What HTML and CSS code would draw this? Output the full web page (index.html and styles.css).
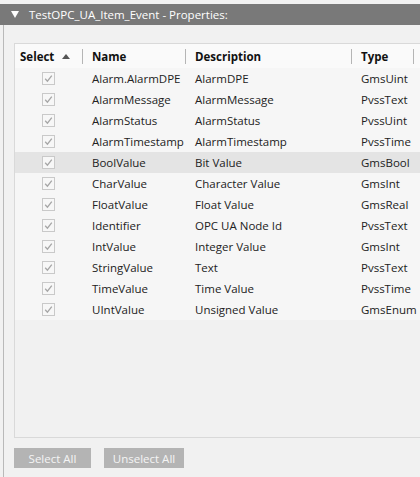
FILE: index.html
```html
<!DOCTYPE html>
<html>
<head>
<meta charset="utf-8">
<link rel="stylesheet" href="styles.css">
</head>
<body>
<div class="titlebar">
  <svg class="tri" width="8" height="7" viewBox="0 0 8 7"><polygon points="0,0 8,0 4,7" fill="#ffffff"/></svg>
  <span class="title">TestOPC_UA_Item_Event - Properties:</span>
</div>
<div class="panel">
  <div class="table">
    <div class="head">
      <div class="hc first">Select<svg class="sort" width="8" height="5" viewBox="0 0 8 5"><polygon points="0,5 8,5 4,0" fill="#555"/></svg></div>
      <div class="hc">Name</div>
      <div class="hc">Description</div>
      <div class="hc">Type</div>
      <div class="hc last"></div>
    </div>
    <div class="rows" id="rows"></div>
  </div>
  <div class="buttons">
    <div class="btn b1">Select All</div>
    <div class="btn b2">Unselect All</div>
  </div>
</div>
<script src="script.js"></script>
</body>
</html>
```
FILE: script.js
```js
var data = [
  ["Alarm.AlarmDPE","AlarmDPE","GmsUint"],
  ["AlarmMessage","AlarmMessage","PvssText"],
  ["AlarmStatus","AlarmStatus","PvssUint"],
  ["AlarmTimestamp","AlarmTimestamp","PvssTime"],
  ["BoolValue","Bit Value","GmsBool"],
  ["CharValue","Character Value","GmsInt"],
  ["FloatValue","Float Value","GmsReal"],
  ["Identifier","OPC UA Node Id","PvssText"],
  ["IntValue","Integer Value","GmsInt"],
  ["StringValue","Text","PvssText"],
  ["TimeValue","Time Value","PvssTime"],
  ["UIntValue","Unsigned Value","GmsEnum"]
];
var box = document.getElementById("rows");
var chk = '<svg width="13" height="13" viewBox="0 0 13 13"><rect x="0.5" y="0.5" width="12" height="12" fill="#f7f7f7" stroke="#c9c9c9"/><path d="M3.2 6.8 L5.4 9.2 L9.8 3.6" fill="none" stroke="#a6a6a6" stroke-width="1.3"/></svg>';
data.forEach(function (d, i) {
  var r = document.createElement("div");
  r.className = "row" + (i === 4 ? " sel" : "");
  r.innerHTML = '<div class="c cb">' + chk + '</div><div class="c">' + d[0] + '</div><div class="c">' + d[1] + '</div><div class="c">' + d[2] + '</div><div class="c"></div>';
  box.appendChild(r);
});
```
FILE: styles.css
```css
html, body {
  margin: 0;
  padding: 0;
  background: #f1f1f1;
  overflow: hidden;
  width: 420px;
  height: 477px;
  font-family: "Open Sans", "Noto Sans", sans-serif;
}
.titlebar {
  margin-top: 4px;
  height: 21px;
  background: #797979;
  display: flex;
  align-items: center;
  color: #ffffff;
  font-size: 11.5px;
}
.tri {
  margin-left: 11px;
  margin-right: 10px;
}
.panel {
  margin-left: 3px;
  border-left: 1px solid #b9b9b9;
  padding-left: 10px;
  padding-top: 18px;
  height: 452px;
  box-sizing: border-box;
  width: 417px;
  overflow: hidden;
}
.table {
  border: 1px solid #d9d9d9;
  height: 395px;
  box-sizing: border-box;
  width: 430px;
}
.head, .row {
  display: grid;
  grid-template-columns: 67px 103px 166px 62px 1fr;
}
.head {
  height: 24px;
  background: #fafafa;
  font-weight: bold;
  font-size: 11.5px;
  color: #111;
}
.hc {
  display: flex;
  align-items: center;
  padding-left: 10px;
  position: relative;
}
.hc.first {
  padding-left: 5px;
}
.hc + .hc::before {
  content: "";
  position: absolute;
  left: 0;
  top: 5px;
  height: 15px;
  border-left: 1px solid #b5b5b5;
}
.sort {
  margin-left: 8px;
}
.row {
  height: 21px;
  font-size: 11.5px;
  color: #222;
  background: #f6f6f6;
}
.row.sel {
  background: #e4e4e4;
}
.c {
  display: flex;
  align-items: center;
  padding-left: 10px;
  white-space: nowrap;
}
.c.cb {
  padding-left: 0;
  justify-content: center;
}
.buttons {
  display: flex;
  gap: 13px;
  margin-top: 10px;
}
.btn {
  height: 20px;
  background: #b4b4b4;
  color: #f4f4f4;
  font-size: 11.5px;
  display: flex;
  align-items: center;
  justify-content: center;
}
.b1 { width: 77px; }
.b2 { width: 80px; }
```
